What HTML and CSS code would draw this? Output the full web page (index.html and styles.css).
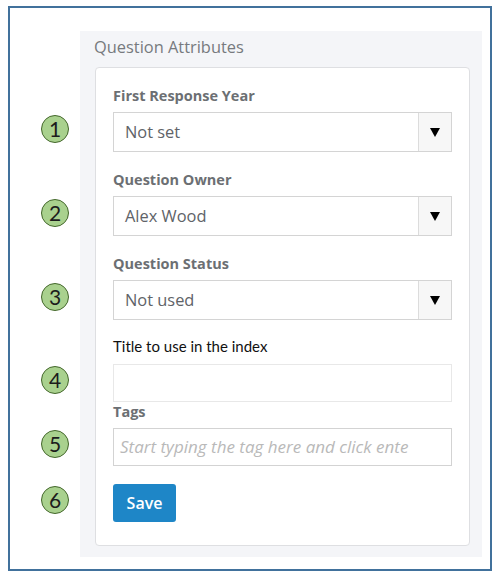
FILE: index.html
```html
<!DOCTYPE html>
<html lang="en">
<head>
<meta charset="utf-8">
<title>Question Attributes</title>
<link rel="stylesheet" href="styles.css">
</head>
<body>
<div class="frame">
  <section class="panel">
    <h2 class="panel-title">Question Attributes</h2>
    <div class="card">
      <div class="field">
        <label class="label">First Response Year</label>
        <div class="control">
          <span class="marker">1</span>
          <div class="select"><span class="select-value">Not set</span><span class="select-btn"><i class="caret"></i></span></div>
        </div>
      </div>
      <div class="field">
        <label class="label">Question Owner</label>
        <div class="control">
          <span class="marker">2</span>
          <div class="select"><span class="select-value">Alex Wood</span><span class="select-btn"><i class="caret"></i></span></div>
        </div>
      </div>
      <div class="field field-status">
        <label class="label">Question Status</label>
        <div class="control">
          <span class="marker">3</span>
          <div class="select"><span class="select-value">Not used</span><span class="select-btn"><i class="caret"></i></span></div>
        </div>
      </div>
      <div class="field field-title">
        <label class="label label-plain">Title to use in the index</label>
        <div class="control">
          <span class="marker">4</span>
          <div class="input input-light"></div>
        </div>
      </div>
      <div class="field field-tags">
        <label class="label">Tags</label>
        <div class="control">
          <span class="marker">5</span>
          <div class="input"><span class="placeholder">Start typing the tag here and click ente</span></div>
        </div>
      </div>
      <div class="field field-save">
        <div class="control control-btn">
          <span class="marker">6</span>
          <button class="btn">Save</button>
        </div>
      </div>
    </div>
  </section>
</div>
</body>
</html>
```

FILE: styles.css
```css
* { box-sizing: border-box; }
html, body { margin: 0; padding: 0; background: #ffffff; }
body { font-family: "Open Sans", "Noto Sans", sans-serif; }

.frame {
  margin: 6px 0 0 8px;
  width: 484px;
  height: 565px;
  border: 2px solid #41719c;
  padding: 23px 8px 12px 70px;
}

.panel {
  background: #f4f5f8;
  height: 526px;
  padding: 6px 12px 11px 15px;
}

.panel-title {
  margin: 0 0 10px -1px;
  font-size: 16.4px;
  line-height: 20px;
  font-weight: 400;
  color: #777a7e;
}

.card {
  background: #ffffff;
  border: 1px solid #dedfe2;
  border-radius: 4px;
  height: 479px;
  padding: 18px 17px 0 17px;
}

.field { margin-bottom: 18px; }
.field-status { margin-bottom: 16px; }
.field-title { margin-bottom: 0; }
.field-tags { margin-bottom: 18px; }

.label {
  display: block;
  font-size: 14.5px;
  line-height: 20px;
  font-weight: 700;
  color: #6c6f73;
  margin-bottom: 6px;
}
.label-plain {
  font-family: "Lato", "Noto Sans", sans-serif;
  font-weight: 400;
  font-size: 15px;
  color: #111111;
  margin-bottom: 8px;
}

.control { position: relative; }

.marker {
  position: absolute;
  left: -72px;
  top: calc(50% - 17px);
  width: 28px;
  height: 28px;
  border-radius: 50%;
  background: #a9d18e;
  border: 1.5px solid #44672c;
  color: #1c1c1c;
  font-family: "Lato", "Noto Sans", sans-serif;
  font-size: 21px;
  line-height: 25px;
  text-align: center;
}

.select {
  display: flex;
  height: 40px;
  border: 1px solid #d4d4d4;
  background: #ffffff;
}
.select-value {
  flex: 1;
  padding-left: 11px;
  font-size: 16.4px;
  line-height: 38px;
  color: #606368;
}
.select-btn {
  width: 33px;
  border-left: 1px solid #dcdcdc;
  background: #f7f7f7;
  display: flex;
  align-items: center;
  justify-content: center;
}
.caret {
  width: 0;
  height: 0;
  border-left: 5px solid transparent;
  border-right: 5px solid transparent;
  border-top: 9px solid #000000;
}

.input {
  height: 38px;
  border: 1px solid #d3d3d3;
  background: #ffffff;
  padding-left: 6px;
  overflow: hidden;
  white-space: nowrap;
}
.input-light { border-color: #e8e8e8; }
.placeholder {
  font-size: 17px;
  line-height: 36px;
  font-style: italic;
  color: #b9b9b9;
}

.control-btn { display: flex; }
.btn {
  width: 63px;
  height: 38px;
  border: none;
  border-radius: 3px;
  background: #1e86c7;
  color: #ffffff;
  font-family: "Open Sans", "Noto Sans", sans-serif;
  font-size: 16px;
  font-weight: 600;
  padding: 0;
}
```
